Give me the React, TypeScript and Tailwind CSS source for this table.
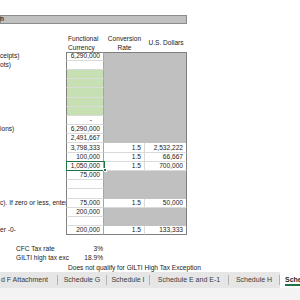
import React from "react";

interface IRow {
  label?: string;
  f: string;
  c?: string;
  u?: string;
  green?: boolean;
  dash?: boolean;
  selected?: boolean;
}

const ROWS: IRow[] = [
  { label: "ceipts)", f: "6,290,000" },
  { label: "ots)", f: "" },
  { f: "", green: true },
  { f: "", green: true },
  { f: "", green: true },
  { f: "", green: true },
  { f: "", green: true },
  { f: "-", dash: true },
  { label: "ions)", f: "6,290,000" },
  { f: "2,491,667" },
  { f: "3,798,333", c: "1.5", u: "2,532,222" },
  { f: "100,000", c: "1.5", u: "66,667" },
  { f: "1,050,000", c: "1.5", u: "700,000", selected: true },
  { f: "75,000" },
  { f: "" },
  { f: "" },
  { label: "c). If zero or less, enter", f: "75,000", c: "1.5", u: "50,000" },
  { f: "200,000" },
  { f: "" },
  { label: "er -0-", f: "200,000", c: "1.5", u: "133,333" },
];

const TABS = [
  { name: "Schedule G", w: "w-[49px]" },
  { name: "Schedule I", w: "w-[43px]" },
  { name: "Schedule E and E-1", w: "w-[79px]" },
  { name: "Schedule H", w: "w-[51px]" },
];

const DataRow: React.FC<{ row: IRow; i: number }> = ({ row, i }) => {
  const first = i === 0;
  const last = i === ROWS.length - 1;
  const edge = `${first ? "border-t border-t-[#7f7f7f]" : ""} ${
    last ? "border-b border-b-[#7f7f7f]" : ""
  }`;
  return (
    <div className="flex h-[9.2px] leading-[8px]">
      <div className="w-[66px] shrink-0 whitespace-nowrap overflow-visible">
        {row.label}
      </div>
      <div
        className={`relative w-[38px] shrink-0 border-l border-l-[#7f7f7f] border-r border-r-[#a6a6a6] flex items-center justify-end ${
          row.dash ? "pr-[11px]" : "pr-[3px]"
        } ${row.green ? "bg-[#c6e0b4]" : "bg-white"} ${
          last ? "" : "border-b border-b-[#dadada]"
        } ${edge}`}
      >
        {row.f}
        {row.selected && (
          <div className="absolute -left-[1px] -top-[1px] w-[39px] h-[10px] border-[1.5px] border-[#217346]">
            <div className="absolute -right-[2.5px] -bottom-[2.5px] w-[4px] h-[4px] bg-[#217346] border border-white" />
          </div>
        )}
      </div>
      {row.c ? (
        <div
          className={`w-[41px] shrink-0 flex items-center justify-end pr-[3px] bg-white border-r border-r-[#dadada] ${
            last ? "" : "border-b border-b-[#dadada]"
          } ${edge}`}
        >
          {row.c}
        </div>
      ) : (
        <div className={`w-[41px] shrink-0 bg-[#c0c0c0] ${edge}`} />
      )}
      {row.u ? (
        <div
          className={`w-[42px] shrink-0 flex items-center justify-end pr-[3px] bg-white border-r border-r-[#7f7f7f] ${
            last ? "" : "border-b border-b-[#dadada]"
          } ${edge}`}
        >
          {row.u}
        </div>
      ) : (
        <div
          className={`w-[42px] shrink-0 bg-[#c0c0c0] border-r border-r-[#7f7f7f] ${edge}`}
        />
      )}
    </div>
  );
};

const App: React.FC = () => {
  return (
    <div className="w-[300px] h-[300px] overflow-hidden bg-white text-[#1a1a1a] text-[6.6px] font-['Liberation_Sans',Arial,sans-serif] flex flex-col">
      <div className="h-[14.8px] shrink-0" />
      <div className="h-[9.2px] w-[187px] shrink-0 bg-[#c0c0c0] border border-[#8c8c8c] flex items-center leading-none">
        <span className="-ml-[1px] font-bold text-[#333]">n</span>
      </div>
      <div className="h-[9.2px] shrink-0" />
      <div className="flex h-[18.4px] shrink-0 leading-[9.2px]">
        <div className="w-[66px]" />
        <div className="w-[38px] pl-[2px] pt-[1px]">
          <div>Functional</div>
          <div>Currency</div>
        </div>
        <div className="w-[41px] text-center pt-[1px]">
          <div>Conversion</div>
          <div>Rate</div>
        </div>
        <div className="w-[42px] flex items-center justify-center pt-[1px]">
          U.S. Dollars
        </div>
      </div>
      <div className="flex flex-col shrink-0">
        {ROWS.map((row, i) => (
          <DataRow key={i} row={row} i={i} />
        ))}
      </div>
      <div className="h-[9.2px] shrink-0" />
      <div className="flex h-[9.2px] shrink-0 items-center">
        <div className="w-[60px] pl-[16px] whitespace-nowrap">CFC Tax rate</div>
        <div className="w-[44px] text-right pr-[1px]">3%</div>
      </div>
      <div className="flex h-[9.2px] shrink-0 items-center">
        <div className="w-[60px] pl-[16px] whitespace-nowrap">
          GILTI high tax exc
        </div>
        <div className="w-[44px] text-right pr-[1px]">18.9%</div>
      </div>
      <div className="flex h-[9.2px] shrink-0 items-center">
        <div className="w-[68px]" />
        <div className="whitespace-nowrap">
          Does not qualify for GILTI High Tax Exception
        </div>
      </div>
      <div className="h-[16px] shrink-0 bg-[#e6e6e6] flex items-stretch text-[7px] text-[#3b3b3b] whitespace-nowrap overflow-hidden">
        <div className="w-[58px] shrink-0 flex items-center justify-end pr-[9px] border-r border-r-[#b3b3b3] my-[3px]">
          d F Attachment
        </div>
        {TABS.map((t) => (
          <div
            key={t.name}
            className={`${t.w} shrink-0 flex items-center justify-center border-r border-r-[#b3b3b3] my-[3px]`}
          >
            {t.name}
          </div>
        ))}
        <div className="w-[40px] shrink-0 bg-white pl-[5px] flex items-center">
          <span className="font-bold text-[#1f1f1f] border-b-2 border-[#217346] leading-[9px]">
            Schedule J
          </span>
        </div>
      </div>
      <div className="flex-1 bg-[#f3f3f3]" />
    </div>
  );
};

export default App;
